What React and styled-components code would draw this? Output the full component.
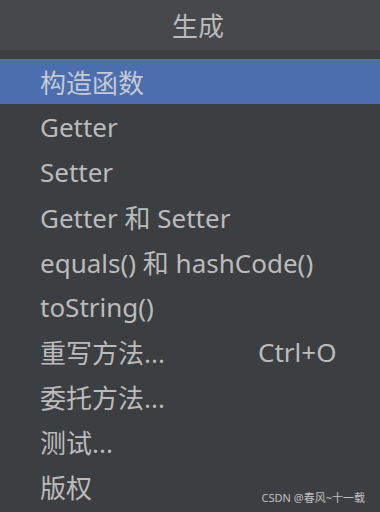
import React from "react";
import styled, { createGlobalStyle } from "styled-components";

const items = [
  { label: "构造函数", selected: true },
  { label: "Getter" },
  { label: "Setter" },
  { label: "Getter 和 Setter" },
  { label: "equals() 和 hashCode()" },
  { label: "toString()" },
  { label: "重写方法...", shortcut: "Ctrl+O" },
  { label: "委托方法..." },
  { label: "测试..." },
  { label: "版权" },
];

const App = () => {
  return (
    <>
      <GlobalStyle />
      <Popup>
        <Header>生成</Header>
        <List>
          {items.map((item) => (
            <Item key={item.label} selected={item.selected}>
              <Label>{item.label}</Label>
              {item.shortcut && <Shortcut>{item.shortcut}</Shortcut>}
            </Item>
          ))}
        </List>
        <Watermark>CSDN @春风~十一载</Watermark>
      </Popup>
    </>
  );
};

export default App;

const GlobalStyle = createGlobalStyle`
  html, body {
    margin: 0;
    padding: 0;
    background: #3c3f41;
  }
  body {
    font-family: "Noto Sans", "Noto Sans CJK SC", sans-serif;
  }
`;

const Popup = styled.div`
  position: relative;
  width: 380px;
  height: 512px;
  background-color: #3c3f41;
  overflow: hidden;
`;

const Header = styled.div`
  height: 50px;
  display: flex;
  align-items: center;
  justify-content: center;
  background-color: #46484b;
  color: #bbbbbb;
  font-size: 26px;
  padding-left: 16px;
`;

const List = styled.div`
  padding-top: 9px;
  display: flex;
  flex-direction: column;
`;

const Item = styled.div`
  height: 45px;
  display: grid;
  grid-template-columns: 218px auto;
  align-items: center;
  padding-left: 40px;
  background-color: ${(p) => (p.selected ? "#4b6eaf" : "transparent")};
  color: ${(p) => (p.selected ? "#c4c9d2" : "#bbbbbb")};
  font-size: 26px;
  white-space: nowrap;
`;

const Label = styled.span``;

const Shortcut = styled.span`
  color: #bbbbbb;
`;

const Watermark = styled.div`
  position: absolute;
  right: 15px;
  bottom: 7px;
  font-size: 11px;
  color: #c0c0c0;
  font-family: "Noto Sans", "Noto Sans CJK SC", sans-serif;
`;
